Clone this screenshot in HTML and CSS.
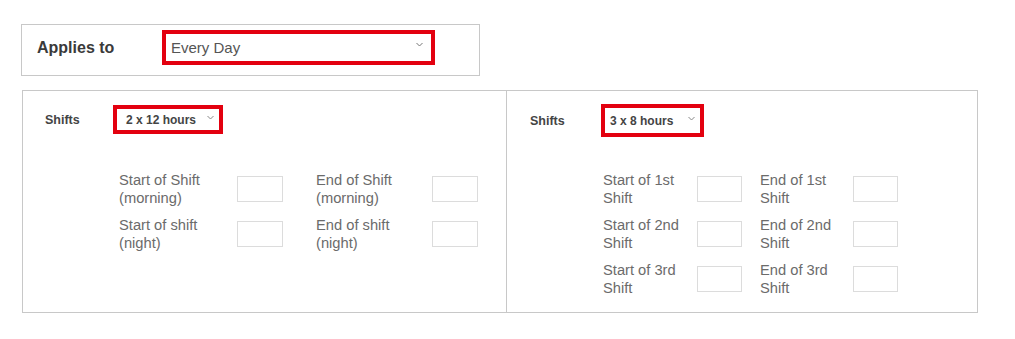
FILE: index.html
```html
<!DOCTYPE html>
<html>
<head>
<meta charset="utf-8">
<link rel="stylesheet" href="styles.css">
</head>
<body>
<div class="applies">
  <div class="applies-label">Applies to</div>
  <div class="select select-day">
    <span>Every Day</span>
    <svg class="chev" width="7" height="5" viewBox="0 0 7 5"><polyline points="0.5,1 3.5,4 6.5,1" fill="none" stroke="#777" stroke-width="1"/></svg>
  </div>
</div>
<div class="panels">
  <div class="panel panel-left">
    <div class="panel-head">
      <div class="shifts-label">Shifts</div>
      <div class="select select-shift">
        <span>2 x 12 hours</span>
        <svg class="chev" width="7" height="5" viewBox="0 0 7 5"><polyline points="0.5,1 3.5,4 6.5,1" fill="none" stroke="#888" stroke-width="1"/></svg>
      </div>
    </div>
    <div class="fields fields-left">
      <div class="flabel">Start of Shift<br>(morning)</div><div class="box"></div>
      <div class="flabel">End of Shift<br>(morning)</div><div class="box"></div>
      <div class="flabel">Start of shift<br>(night)</div><div class="box"></div>
      <div class="flabel">End of shift<br>(night)</div><div class="box"></div>
    </div>
  </div>
  <div class="panel panel-right">
    <div class="panel-head">
      <div class="shifts-label">Shifts</div>
      <div class="select select-shift3">
        <span>3 x 8 hours</span>
        <svg class="chev" width="7" height="5" viewBox="0 0 7 5"><polyline points="0.5,1 3.5,4 6.5,1" fill="none" stroke="#888" stroke-width="1"/></svg>
      </div>
    </div>
    <div class="fields fields-right">
      <div class="flabel">Start of 1st<br>Shift</div><div class="box"></div>
      <div class="flabel">End of 1st<br>Shift</div><div class="box"></div>
      <div class="flabel">Start of 2nd<br>Shift</div><div class="box"></div>
      <div class="flabel">End of 2nd<br>Shift</div><div class="box"></div>
      <div class="flabel">Start of 3rd<br>Shift</div><div class="box"></div>
      <div class="flabel">End of 3rd<br>Shift</div><div class="box"></div>
    </div>
  </div>
</div>
</body>
</html>
```
FILE: styles.css
```css
* { box-sizing: border-box; }
body {
  margin: 0;
  background: #fff;
  font-family: "Liberation Sans", Arial, sans-serif;
}
.applies {
  margin: 24px 0 0 21px;
  width: 459px;
  border: 1px solid #c8c8c8;
  display: flex;
  align-items: flex-start;
  padding: 5px 0 10px 15px;
}
.applies-label {
  width: 125px;
  margin-top: 8px;
  line-height: 20px;
  font-size: 16px;
  font-weight: bold;
  color: #3a3a3a;
}
.select {
  border: 4px solid #e3000f;
  background: #fff;
  display: flex;
  align-items: center;
  justify-content: space-between;
}
.select-day {
  width: 273px;
  height: 35px;
  padding: 0 8px 0 5px;
  font-size: 15px;
  color: #555;
}
.select-day .chev { margin-top: -6px; }
.panels {
  margin: 14px 0 0 22px;
  display: flex;
}
.panel {
  height: 223px;
  border: 1px solid #c8c8c8;
}
.panel-left {
  width: 485px;
  position: relative;
  padding-left: 22px;
}
.panel-left::after {
  content: "";
  position: absolute;
  right: -1px;
  bottom: -7px;
  width: 1px;
  height: 7px;
  background: #c8c8c8;
}
.panel-right {
  width: 471px;
  border-left: none;
  padding-left: 23px;
}
.panel-head {
  display: flex;
  align-items: center;
}
.panel-left .panel-head { padding-top: 14px; }
.panel-right .panel-head { padding-top: 13px; }
.shifts-label {
  font-size: 12.5px;
  font-weight: bold;
  color: #444;
}
.panel-left .shifts-label { width: 68px; }
.panel-right .shifts-label { width: 71px; }
.select-shift {
  width: 110px;
  height: 29px;
  padding: 0 5px 0 9px;
  font-size: 12px;
  font-weight: bold;
  color: #444;
}
.select-shift3 {
  width: 103px;
  height: 33px;
  padding: 0 5px 0 5px;
  font-size: 12px;
  font-weight: bold;
  color: #444;
}
.select-shift .chev, .select-shift3 .chev { margin-top: -5px; }
.fields {
  display: grid;
  row-gap: 9px;
  align-items: center;
}
.fields-left {
  margin-top: 37px;
  margin-left: 74px;
  grid-template-columns: 118px 79px 116px 46px;
}
.fields-right {
  margin-top: 34px;
  margin-left: 73px;
  grid-template-columns: 94px 63px 93px 45px;
}
.flabel {
  font-size: 14.7px;
  line-height: 18px;
  color: #6b6b6b;
}
.box {
  width: 46px;
  height: 26px;
  border: 1px solid #dcdcdc;
  background: #fff;
}
.fields-right .box { width: 45px; }
```
